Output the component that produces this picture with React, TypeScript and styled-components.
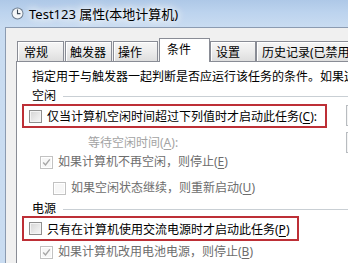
import styled, { createGlobalStyle } from "styled-components";

const GlobalStyle = createGlobalStyle`
  html, body {
    margin: 0;
    padding: 0;
    background: #c6d9ef;
  }
  body {
    font-family: "Noto Sans", "Noto Sans CJK SC", sans-serif;
    font-size: 12px;
    color: #000;
  }
`;

const Window = styled.div`
  width: 348px;
  height: 263px;
  overflow: hidden;
  display: flex;
  flex-direction: column;
  background: linear-gradient(90deg, #c9dcf1, #bcd2eb);
`;

const TitleBar = styled.div`
  height: 27px;
  flex: none;
  display: flex;
  align-items: center;
  gap: 5px;
  padding-left: 11px;
  background: linear-gradient(180deg, #aec8e7 0%, #bcd3ee 45%, #c9dcf1 100%);
`;

const TitleText = styled.span`
  font-size: 13px;
  line-height: 16px;
  white-space: nowrap;
  color: #000;
  text-shadow: 0 0 6px #fff, 0 0 10px #fff, 0 0 14px rgba(255, 255, 255, 0.8);
`;

const Client = styled.div`
  flex: 1;
  width: 520px;
  margin-left: 5px;
  border-left: 1px solid #8b9bb1;
  border-top: 1px solid #8b9bb1;
  background: #f0f0f0;
  padding: 10px 0 0 10px;
`;

const TabStrip = styled.div`
  display: flex;
  align-items: flex-end;
  height: 23px;
  padding-left: 1px;
  position: relative;
  z-index: 1;
`;

const Tab = styled.div<{ $w?: number; $pad: number; $ml: number; $active?: boolean }>`
  box-sizing: border-box;
  ${(p) => (p.$w ? `width: ${p.$w}px;` : "padding-right: 40px;")}
  margin-left: ${(p) => p.$ml}px;
  padding-left: ${(p) => p.$pad}px;
  height: ${(p) => (p.$active ? 24 : 20)}px;
  margin-bottom: ${(p) => (p.$active ? -1 : 0)}px;
  padding-top: ${(p) => (p.$active ? 0 : 2)}px;
  padding-bottom: ${(p) => (p.$active ? 2 : 0)}px;
  display: flex;
  align-items: center;
  line-height: 16px;
  white-space: nowrap;
  border: 1px solid #898c95;
  border-bottom: none;
  background: ${(p) =>
    p.$active ? "#fff" : "linear-gradient(180deg, #f6f6f6 0%, #ececec 50%, #dedede 100%)"};
  box-shadow: ${(p) => (p.$active ? "none" : "inset 1px 1px 0 #fff")};
`;

const Panel = styled.div`
  background: #fff;
  border: 1px solid #898c95;
  height: 320px;
  padding: 7px 0 0 5px;
`;

const Intro = styled.div`
  margin-left: 10px;
  line-height: 16px;
  white-space: nowrap;
`;

const GroupHeader = styled.div<{ $mt: number }>`
  display: flex;
  align-items: center;
  gap: 7px;
  margin: ${(p) => p.$mt}px 0 0 10px;
  width: 420px;
  line-height: 14px;
  white-space: nowrap;
  &::after {
    content: "";
    flex: 1;
    height: 1px;
    margin-top: 1px;
    background: #c9cfd4;
  }
`;

const FieldRow = styled.div<{ $mt: number; $h: number }>`
  display: grid;
  grid-template-columns: 324px 80px;
  height: ${(p) => p.$h}px;
  margin-top: ${(p) => p.$mt}px;
`;

const RedBox = styled.div<{ $w: number }>`
  box-sizing: border-box;
  width: ${(p) => p.$w}px;
  height: 100%;
  border: 2px solid #bd2f36;
  display: flex;
  align-items: center;
  gap: 5px;
  padding-left: 5px;
  white-space: nowrap;
`;

const Combo = styled.div<{ $mt: number }>`
  box-sizing: border-box;
  height: 21px;
  margin-top: ${(p) => p.$mt}px;
  border: 1px solid #b8bcc0;
  background: #f4f4f4;
`;

const WaitLabel = styled.div`
  padding-left: 66px;
  display: flex;
  align-items: center;
  color: #a3a3a3;
  white-space: nowrap;
  line-height: 16px;
`;

const OptionRow = styled.div<{ $indent: number; $mt: number; $muted?: boolean }>`
  display: flex;
  align-items: center;
  gap: 5px;
  height: 18px;
  margin-top: ${(p) => p.$mt}px;
  padding-left: ${(p) => p.$indent}px;
  color: ${(p) => (p.$muted ? "#6d6d6d" : "#000")};
  white-space: nowrap;
  line-height: 16px;
`;

const Box = styled.span<{ $disabled?: boolean }>`
  flex: none;
  box-sizing: border-box;
  width: 13px;
  height: 13px;
  display: flex;
  align-items: center;
  justify-content: center;
  border: 1px solid ${(p) => (p.$disabled ? "#c2c2c2" : "#8f8f8f")};
  background: ${(p) =>
    p.$disabled ? "#f7f7f7" : "linear-gradient(135deg, #d4d4d4 0%, #eaeaea 60%, #f7f7f7 100%)"};
  box-shadow: inset 0 0 0 1px ${(p) => (p.$disabled ? "#fff" : "#f4f4f4")};
`;

const Key = styled.span`
  text-decoration: underline;
  text-underline-offset: 2px;
`;

const ClockIcon = () => (
  <svg width="13" height="13" viewBox="0 0 13 13">
    <circle cx="6.5" cy="6.5" r="6" fill="#6b7b8e" />
    <circle cx="6.5" cy="6.5" r="5" fill="#f4f6f8" />
    <path d="M6.5 2.6 V6.6 H9.4" stroke="#3d4a58" strokeWidth="1.1" fill="none" />
  </svg>
);

const Check = () => (
  <svg width="9" height="9" viewBox="0 0 9 9">
    <path d="M1.2 4.6 L3.5 7 L7.8 1.4" stroke="#a6a6a6" strokeWidth="1.4" fill="none" />
  </svg>
);

const CheckBox = ({ checked, disabled }: { checked?: boolean; disabled?: boolean }) => (
  <Box $disabled={disabled}>{checked && <Check />}</Box>
);

const tabs = [
  { label: "常规", w: 47, pad: 6, ml: 0 },
  { label: "触发器", w: 47, pad: 4, ml: 1 },
  { label: "操作", w: 45, pad: 4, ml: 1 },
  { label: "条件", w: 51, pad: 7, ml: 1, active: true },
  { label: "设置", w: 46, pad: 5, ml: 0 },
  { label: "历史记录(已禁用)", pad: 5, ml: 0 },
];

export default function App() {
  return (
    <>
      <GlobalStyle />
      <Window>
        <TitleBar>
          <ClockIcon />
          <TitleText>Test123 属性(本地计算机)</TitleText>
        </TitleBar>
        <Client>
          <TabStrip>
            {tabs.map((t) => (
              <Tab key={t.label} $w={t.w} $pad={t.pad} $ml={t.ml} $active={t.active}>
                {t.label}
              </Tab>
            ))}
          </TabStrip>
          <Panel>
            <Intro>指定用于与触发器一起判断是否应运行该任务的条件。如果这里指定的任一条件不为真，则该任务将不会运行。</Intro>

            <GroupHeader $mt={4}>空闲</GroupHeader>
            <FieldRow $mt={1} $h={24}>
              <RedBox $w={305}>
                <CheckBox />
                <span>
                  仅当计算机空闲时间超过下列值时才启动此任务(<Key>C</Key>):
                </span>
              </RedBox>
              <Combo $mt={1} />
            </FieldRow>
            <FieldRow $mt={4} $h={21}>
              <WaitLabel>
                等待空闲时间(<Key>A</Key>):
              </WaitLabel>
              <Combo $mt={0} />
            </FieldRow>
            <OptionRow $indent={18} $mt={0} $muted>
              <CheckBox checked disabled />
              <span>
                如果计算机不再空闲，则停止(<Key>E</Key>)
              </span>
            </OptionRow>
            <OptionRow $indent={31} $mt={8} $muted>
              <CheckBox disabled />
              <span>
                如果空闲状态继续，则重新启动(<Key>U</Key>)
              </span>
            </OptionRow>

            <GroupHeader $mt={5}>电源</GroupHeader>
            <FieldRow $mt={0} $h={25}>
              <RedBox $w={277}>
                <CheckBox />
                <span>
                  只有在计算机使用交流电源时才启动此任务(<Key>P</Key>)
                </span>
              </RedBox>
            </FieldRow>
            <OptionRow $indent={18} $mt={2} $muted>
              <CheckBox checked disabled />
              <span>
                如果计算机改用电池电源，则停止(<Key>B</Key>)
              </span>
            </OptionRow>
          </Panel>
        </Client>
      </Window>
    </>
  );
}
